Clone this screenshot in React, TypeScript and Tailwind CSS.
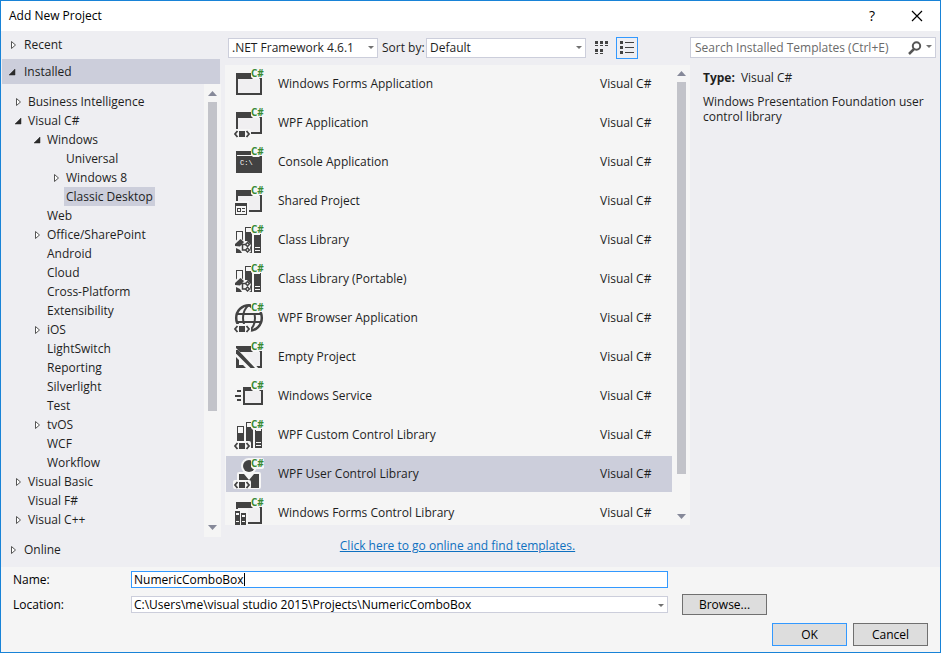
import { useState } from 'react';
import type { ReactNode } from 'react';

type TreeItem = {
  name: string;
  level: 1 | 2 | 3;
  state?: 'open' | 'closed';
};

const TREE_ITEMS: TreeItem[] = [
  { name: 'Business Intelligence', level: 1, state: 'closed' },
  { name: 'Visual C#', level: 1, state: 'open' },
  { name: 'Windows', level: 2, state: 'open' },
  { name: 'Universal', level: 3 },
  { name: 'Windows 8', level: 3, state: 'closed' },
  { name: 'Classic Desktop', level: 3 },
  { name: 'Web', level: 2 },
  { name: 'Office/SharePoint', level: 2, state: 'closed' },
  { name: 'Android', level: 2 },
  { name: 'Cloud', level: 2 },
  { name: 'Cross-Platform', level: 2 },
  { name: 'Extensibility', level: 2 },
  { name: 'iOS', level: 2, state: 'closed' },
  { name: 'LightSwitch', level: 2 },
  { name: 'Reporting', level: 2 },
  { name: 'Silverlight', level: 2 },
  { name: 'Test', level: 2 },
  { name: 'tvOS', level: 2, state: 'closed' },
  { name: 'WCF', level: 2 },
  { name: 'Workflow', level: 2 },
  { name: 'Visual Basic', level: 1, state: 'closed' },
  { name: 'Visual F#', level: 1 },
  { name: 'Visual C++', level: 1, state: 'closed' },
];

const LEVEL_PADDING = {
  1: 'pl-3',
  2: 'pl-[31px]',
  3: 'pl-[50px]',
};

const INK = '#424242';
const PAPER = '#f6f6f6';
const FILL = '#f0eff1';

/* Template icons */

const IconBase = ({ children }: { children: ReactNode }) => (
  <svg width="36" height="36" viewBox="0 0 36 36" className="shrink-0" aria-hidden="true">
    {children}
    <path d="M20 3h12v9h-4l-1 1h-6l-2-2V4z" fill={PAPER} />
    <text x="19" y="11" fontSize="10" fontWeight="700" fontFamily="Open Sans, sans-serif" fill="#388a34">
      C#
    </text>
  </svg>
);

const Frame = () => (
  <g shapeRendering="crispEdges">
    <rect x="4" y="7" width="26" height="22" fill={INK} />
    <rect x="6" y="13" width="22" height="14" fill={FILL} />
  </g>
);

const Brackets = () => (
  <g>
    <rect x="1" y="24" width="18" height="9" rx="2" fill={PAPER} />
    <path d="M5.5 26 3 29l2.5 3M14.5 26l2.5 3-2.5 3" fill="none" stroke={INK} strokeWidth="1.8" />
    <rect x="7" y="26" width="6" height="6" fill={INK} />
  </g>
);

const Books = () => (
  <g shapeRendering="crispEdges">
    <rect x="5" y="9" width="7" height="22" fill={INK} />
    <rect x="6" y="10" width="5" height="6" fill={PAPER} />
    <path d="M14 31V5h6v1h-5v4h6v21z" fill={INK} />
    <rect x="23" y="8" width="7" height="23" fill={INK} />
    <rect x="24" y="9" width="5" height="5" fill={PAPER} />
    <rect x="24" y="25" width="5" height="1" fill={PAPER} />
    <rect x="24" y="28" width="5" height="1" fill={PAPER} />
  </g>
);

const FormsIcon = () => (
  <IconBase>
    <Frame />
  </IconBase>
);

const WpfIcon = () => (
  <IconBase>
    <Frame />
    <Brackets />
  </IconBase>
);

const ConsoleIcon = () => (
  <IconBase>
    <rect x="4" y="7" width="26" height="22" fill={INK} shapeRendering="crispEdges" />
    <rect x="5" y="11" width="16" height="1" fill={PAPER} shapeRendering="crispEdges" />
    <text x="8" y="21" fontSize="7" fontFamily="Liberation Mono, monospace" fill="#ffffff">
      C:\
    </text>
  </IconBase>
);

const SharedIcon = () => (
  <IconBase>
    <Frame />
    <g shapeRendering="crispEdges">
      <rect x="2" y="18" width="15" height="16" fill={PAPER} />
      <rect x="3" y="20" width="12" height="12" fill={INK} />
      <rect x="4" y="23" width="10" height="8" fill={PAPER} />
      <rect x="5" y="25" width="4" height="4" fill={INK} />
      <rect x="6" y="26" width="2" height="2" fill={PAPER} />
      <rect x="10" y="25" width="3" height="1" fill={INK} />
      <rect x="10" y="28" width="3" height="1" fill={INK} />
    </g>
  </IconBase>
);

const LibraryIcon = () => (
  <IconBase>
    <g shapeRendering="crispEdges">
      <rect x="4" y="9" width="7" height="22" fill={INK} />
      <rect x="5" y="10" width="5" height="8" fill={PAPER} />
      <path d="M13 31V5h6v1h-5v4h6v21z" fill={INK} />
      <rect x="22" y="7" width="7" height="24" fill={INK} />
      <rect x="23" y="9" width="5" height="4" fill={PAPER} />
      <rect x="23" y="25" width="5" height="1" fill={PAPER} />
      <rect x="23" y="28" width="5" height="1" fill={PAPER} />
    </g>
    <path d="M7 15l5 4h3l4 4-1 3 1 4-4 2-5-1-2-3-6-3v-4z" fill={PAPER} />
    <path d="M8.5 17l3.5 3-4 4.5L3 24v-2z" fill={INK} />
    <path d="M9 22.5h5M10.5 23v5h3" fill="none" stroke={INK} strokeWidth="1.5" />
    <path d="M15.5 19.5l3 3-3 3-3-3zM15.5 25l3 3-3 3-3-3z" fill={INK} />
    <path d="M15.5 21.5l1 1-1 1-1-1zM15.5 27l1 1-1 1-1-1z" fill={PAPER} />
  </IconBase>
);

const BrowserIcon = () => (
  <IconBase>
    <g fill="none" stroke={INK} strokeWidth="2.5">
      <circle cx="17" cy="18" r="12.8" />
      <path d="M17 5c-8 6-8 20 0 26M17 5c8 6 8 20 0 26" strokeWidth="2" />
      <path d="M5 14h24M5 22h24" strokeWidth="2" />
    </g>
    <Brackets />
  </IconBase>
);

const EmptyIcon = () => (
  <IconBase>
    <Frame />
    <path d="M3 8h4l5 5 15 17H3z" fill={PAPER} />
    <path d="M4 7h7l5 6H8L4 9z" fill={INK} />
    <path d="M4 11l2 0 17 18h-4.5L4 14.5z" fill={INK} />
    <path d="M4 18v11h10l-3-3H7v-5z" fill={INK} />
  </IconBase>
);

const ServiceIcon = () => (
  <IconBase>
    <g shapeRendering="crispEdges">
      <rect x="11" y="9" width="20" height="18" fill={INK} />
      <rect x="13" y="13" width="16" height="12" fill={FILL} />
      <rect x="5" y="12" width="4" height="2" fill={INK} />
      <rect x="3" y="17" width="6" height="2" fill={INK} />
      <rect x="5" y="21" width="4" height="2" fill={INK} />
    </g>
  </IconBase>
);

const CustomControlIcon = () => (
  <IconBase>
    <Books />
    <Brackets />
  </IconBase>
);

const UserControlIcon = () => (
  <IconBase>
    <g stroke={PAPER} strokeWidth="4" strokeLinejoin="round" fill={PAPER}>
      <circle cx="17" cy="10" r="6" />
      <path d="M7 18h20v13H7z" />
      <path d="M20 4h10v7H20z" />
    </g>
    <circle cx="17" cy="10" r="6" fill={INK} />
    <path d="M7 18h5l5 6 5-6h5v14H7z" fill={INK} />
    <Brackets />
  </IconBase>
);

const FormsControlIcon = () => (
  <IconBase>
    <Frame />
    <g shapeRendering="crispEdges">
      <rect x="2" y="14" width="14" height="18" fill={PAPER} />
      <rect x="3" y="16" width="5" height="14" fill={INK} />
      <rect x="4" y="18" width="3" height="2" fill={PAPER} />
      <rect x="4" y="26" width="3" height="1" fill={PAPER} />
      <rect x="9" y="18" width="5" height="12" fill={INK} />
      <rect x="10" y="20" width="3" height="2" fill={PAPER} />
      <rect x="10" y="26" width="3" height="1" fill={PAPER} />
    </g>
  </IconBase>
);

const TEMPLATES = [
  { name: 'Windows Forms Application', icon: FormsIcon },
  { name: 'WPF Application', icon: WpfIcon },
  { name: 'Console Application', icon: ConsoleIcon },
  { name: 'Shared Project', icon: SharedIcon },
  { name: 'Class Library', icon: LibraryIcon },
  { name: 'Class Library (Portable)', icon: LibraryIcon },
  { name: 'WPF Browser Application', icon: BrowserIcon },
  { name: 'Empty Project', icon: EmptyIcon },
  { name: 'Windows Service', icon: ServiceIcon },
  { name: 'WPF Custom Control Library', icon: CustomControlIcon },
  { name: 'WPF User Control Library', icon: UserControlIcon },
  { name: 'Windows Forms Control Library', icon: FormsControlIcon },
];

/* Small shared pieces */

const Expander = ({ state }: { state?: 'open' | 'closed' }) => (
  <svg width="8" height="10" viewBox="0 0 8 10" className="shrink-0" aria-hidden="true">
    {state === 'closed' && <path d="M2.5 1.5v7l4-3.5z" fill="#ffffff" stroke="#555555" />}
    {state === 'open' && <path d="M7 2v6H1z" fill="#2b2b2b" stroke="#2b2b2b" strokeWidth="0.5" />}
  </svg>
);

const Caret = () => (
  <svg width="6" height="3" viewBox="0 0 6 3" className="pointer-events-none absolute right-1 top-2" aria-hidden="true">
    <path d="M0 0h6L3 3z" fill="#717171" />
  </svg>
);

const ScrollArrow = ({ up = false }: { up?: boolean }) => (
  <svg width="9" height="5" viewBox="0 0 9 5" className="shrink-0" aria-hidden="true">
    <path d={up ? 'M0 5h9L4.5 0z' : 'M0 0h9L4.5 5z'} fill="#868999" />
  </svg>
);

const App = () => {
  const [category, setCategory] = useState('Classic Desktop');
  const [template, setTemplate] = useState('WPF User Control Library');
  const [name, setName] = useState('NumericComboBox');
  const [isEditing, setIsEditing] = useState(false);

  return (
    <div className="flex h-screen flex-col border border-[#1883d7] bg-[#eeeef2] font-['Open_Sans',sans-serif] text-xs text-[#1e1e1e]">
      {/* Title bar */}
      <header className="flex h-[30px] shrink-0 items-center bg-white pl-2 pr-[13px] text-black">
        <h1 className="flex-1">Add New Project</h1>
        <button aria-label="Help" className="mr-8 text-sm font-medium">?</button>
        <button aria-label="Close" className="p-1">
          <svg width="12" height="12" viewBox="0 0 12 12">
            <path d="M1 1l10 10M11 1L1 11" stroke="#000000" strokeWidth="1.2" />
          </svg>
        </button>
      </header>

      <main className="flex min-h-0 flex-1">
        {/* Categories */}
        <aside className="flex w-[224px] shrink-0 flex-col pl-px pr-1">
          <button className="flex h-7 shrink-0 items-center gap-[7px] pl-[7px]">
            <Expander state="closed" />
            Recent
          </button>
          <button className="mr-px flex h-[25px] shrink-0 items-center gap-2 bg-[#cccedb] pl-[6px]">
            <Expander state="open" />
            Installed
          </button>
          <div className="flex min-h-0 flex-1">
            <ul className="min-w-0 flex-1 overflow-hidden pt-2">
              {TREE_ITEMS.map((item) => (
                <li key={item.name} className={LEVEL_PADDING[item.level]}>
                  <button
                    onClick={() => setCategory(item.name)}
                    className="flex h-[19px] items-center gap-1 whitespace-nowrap"
                  >
                    <Expander state={item.state} />
                    <span className={item.name === category ? 'bg-[#cccedb] px-0.5 leading-[19px]' : 'px-0.5'}>
                      {item.name}
                    </span>
                  </button>
                </li>
              ))}
            </ul>
            <div className="flex w-[17px] flex-col items-center bg-[#f5f5f5] py-[7px]">
              <ScrollArrow up />
              <div className="min-h-0 w-full flex-1 px-1 py-[6px]">
                <div className="h-[74%] bg-[#c2c3c9]" />
              </div>
              <ScrollArrow />
            </div>
          </div>
          <button className="flex h-[30px] shrink-0 items-center gap-[7px] pb-1 pl-[7px]">
            <Expander state="closed" />
            Online
          </button>
        </aside>

        {/* Templates */}
        <section className="flex min-w-0 flex-1 flex-col">
          <div className="flex h-[34px] shrink-0 items-center pl-[3px]">
            <div className="relative w-[150px]">
              <select
                aria-label="Framework"
                className="block h-5 w-full appearance-none border border-[#cccedb] bg-white pl-[3px] leading-4"
              >
                <option>.NET Framework 4.6.1</option>
              </select>
              <Caret />
            </div>
            <label htmlFor="sort" className="w-12 whitespace-nowrap pl-1">
              Sort by:
            </label>
            <div className="relative w-40">
              <select
                id="sort"
                className="block h-5 w-full appearance-none border border-[#cccedb] bg-white pl-[3px] leading-4"
              >
                <option>Default</option>
              </select>
              <Caret />
            </div>
            <button aria-label="Small icons" className="ml-[5px] flex size-[22px] items-center justify-center">
              <svg width="16" height="16" viewBox="0 0 16 16" shapeRendering="crispEdges" fill={INK}>
                <path d="M1 1h3v3H1zM6 1h3v3H6zM11 1h3v3h-3zM1 5h3v1H1zM6 5h3v1H6zM11 5h3v1h-3z" />
                <path d="M1 9h3v3H1zM6 9h3v3H6zM1 13h3v1H1zM6 13h3v1H6z" />
              </svg>
            </button>
            <button
              aria-label="List"
              className="ml-[3px] flex size-[22px] items-center justify-center border border-[#3399ff]"
            >
              <svg width="16" height="16" viewBox="0 0 16 16" shapeRendering="crispEdges" fill={INK}>
                <path d="M1 1h3v3H1zM1 6h3v3H1zM1 11h3v3H1zM6 2h9v1H6zM6 7h9v1H6zM6 12h9v1H6z" />
              </svg>
            </button>
          </div>

          <div className="flex min-h-0 flex-1 bg-[#f5f5f5] pl-px">
            <ul className="flex min-w-0 flex-1 flex-col gap-[3px] overflow-hidden pt-px">
              {TEMPLATES.map(({ name: title, icon: Icon }) => (
                <li key={title} className="shrink-0">
                  <button
                    onClick={() => setTemplate(title)}
                    className={`flex h-9 w-full items-center pl-[6px] text-left ${title === template ? 'bg-[#cccedb]' : ''}`}
                  >
                    <Icon />
                    <span className="flex-1 pl-[10px]">{title}</span>
                    <span className="w-[72px]">Visual C#</span>
                  </button>
                </li>
              ))}
            </ul>
            <div className="flex w-[18px] flex-col items-center py-[6px]">
              <ScrollArrow up />
              <div className="min-h-0 w-full flex-1 py-[6px] pl-[5px] pr-1">
                <div className="h-[92%] bg-[#c2c3c9]" />
              </div>
              <ScrollArrow />
            </div>
          </div>

          <div className="flex h-[42px] shrink-0 items-center justify-center">
            <a href="#online" className="text-[#0e70c0] underline">
              Click here to go online and find templates.
            </a>
          </div>
        </section>

        {/* Search and details */}
        <aside className="w-[250px] shrink-0 pr-1 pt-[6px]">
          <div className="relative">
            <input
              type="text"
              aria-label="Search"
              placeholder="Search Installed Templates (Ctrl+E)"
              className="block h-[21px] w-full border border-[#cccedb] bg-white pl-1 pr-8 placeholder:text-[#6a6a6a]"
            />
            <svg width="14" height="14" viewBox="0 0 14 14" className="pointer-events-none absolute right-[14px] top-1" aria-hidden="true">
              <circle cx="8.5" cy="5" r="3.7" fill="none" stroke="#555555" strokeWidth="2" />
              <path d="M6 8l-5 5" stroke="#555555" strokeWidth="2.5" />
            </svg>
            <Caret />
          </div>
          <div className="pl-[13px] pt-3">
            <p className="leading-4">
              <strong className="mr-[6px]">Type:</strong>Visual C#
            </p>
            <p className="pt-2 leading-[15px]">Windows Presentation Foundation user control library</p>
          </div>
        </aside>
      </main>

      {/* Project name and location */}
      <footer className="shrink-0 bg-[#f5f5f5] px-3 pb-[6px] pt-1 text-black">
        <div className="flex items-center">
          <label htmlFor="name" className="w-[118px]">
            Name:
          </label>
          <div className="relative min-w-0 flex-1">
            <input
              id="name"
              type="text"
              value={name}
              onChange={(e) => setName(e.target.value)}
              onFocus={() => setIsEditing(true)}
              className="block h-[17px] w-full border border-[#3399ff] bg-white px-0.5 outline-none"
            />
            {/* Insertion point until the box takes focus */}
            {!isEditing && <span className="pointer-events-none absolute left-[113px] top-0.5 h-[13px] w-px bg-black" />}
          </div>
          <div className="w-[260px]" />
        </div>
        <div className="flex items-center pt-[6px]">
          <label htmlFor="location" className="w-[118px]">
            Location:
          </label>
          <div className="relative min-w-0 flex-1">
            <select
              id="location"
              className="block h-[17px] w-full appearance-none border border-[#cccedb] bg-white px-0.5 leading-[15px]"
            >
              <option>C:\Users\me\visual studio 2015\Projects\NumericComboBox</option>
            </select>
            <Caret />
          </div>
          <div className="w-[260px] pl-[14px]">
            <button className="block h-[21px] w-[85px] border border-[#707070] bg-[#dddddd]">Browse...</button>
          </div>
        </div>
        <div className="flex justify-end gap-[6px] pt-2">
          <button className="h-[23px] w-[75px] border border-[#3399ff] bg-[#dddddd]">OK</button>
          <button className="h-[23px] w-[75px] border border-[#707070] bg-[#dddddd]">Cancel</button>
        </div>
      </footer>
    </div>
  );
};

export default App;
